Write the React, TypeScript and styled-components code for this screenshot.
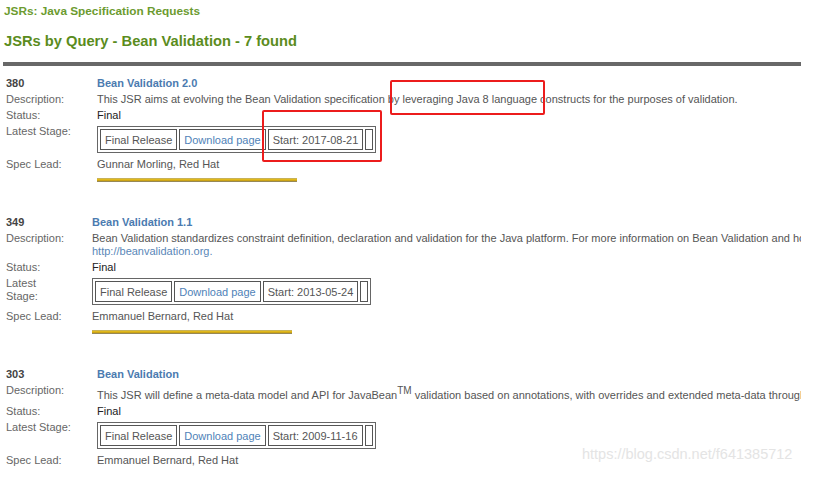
import styled, { createGlobalStyle } from "styled-components";

const GlobalStyle = createGlobalStyle`
  html, body {
    margin: 0;
    padding: 0;
    background: #fff;
    overflow: hidden;
  }
  body {
    font-family: "Liberation Sans", Arial, sans-serif;
  }
`;

const Page = styled.div`
  position: relative;
  width: 801px;
  height: 478px;
  overflow: hidden;
`;

const SiteTitle = styled.div`
  padding: 4px 0 0 4px;
  font-size: 11.8px;
  font-weight: bold;
  line-height: 14px;
  color: #6c9b30;
`;

const Heading = styled.h1`
  margin: 13px 0 0 4px;
  font-size: 14.7px;
  line-height: 20px;
  font-weight: bold;
  color: #5b8c1d;
`;

const Rule = styled.div`
  margin: 11px 0 0 3px;
  height: 4px;
  background: #686868;
`;

const EntryList = styled.div`
  padding-top: 9px;
`;

const Entry = styled.div<{ $labelWidth: number }>`
  display: grid;
  grid-template-columns: ${(p) => p.$labelWidth}px 1fr;
  padding-left: 6px;
  font-size: 11px;
  line-height: 13px;
  & + & {
    margin-top: 32px;
  }
`;

const Label = styled.div<{ $strong?: boolean }>`
  padding: 2px 0 1px;
  color: ${(p) => (p.$strong ? "#444" : "#666")};
  font-weight: ${(p) => (p.$strong ? "bold" : "normal")};
  white-space: pre-line;
`;

const Value = styled.div<{ $dark?: boolean }>`
  padding: 2px 0 1px;
  min-width: 0;
  color: ${(p) => (p.$dark ? "#222" : "#555")};
  white-space: nowrap;
`;

const Title = styled.a`
  color: #4b7bb0;
  font-weight: bold;
  text-decoration: none;
`;

const Link = styled.a`
  color: #5a87b8;
  text-decoration: none;
`;

const Sup = styled.span`
  font-size: 10px;
  line-height: 13px;
  vertical-align: 5px;
`;

const StageCellWrap = styled.div`
  padding: 3px 0 3px;
`;

const StageBox = styled.div`
  display: inline-flex;
  gap: 2px;
  padding: 2px;
  border: 1px solid #666;
`;

const StageCell = styled.div<{ $empty?: boolean }>`
  border: 1px solid #555;
  padding: 4px ${(p) => (p.$empty ? "3px" : "4px")} 2px;
  line-height: 13px;
  min-height: 13px;
  color: #555;
  a {
    color: #4f82b8;
    text-decoration: none;
  }
`;

const GoldLine = styled.div`
  grid-column: 2;
  margin-top: 6px;
  width: 200px;
  height: 4px;
  background: linear-gradient(#b9ad78, #e3bb1c 35%, #caa114 65%, #7a7a7a);
`;

const Annotation = styled.div<{
  $x: number;
  $y: number;
  $w: number;
  $h: number;
}>`
  position: absolute;
  left: ${(p) => p.$x}px;
  top: ${(p) => p.$y}px;
  width: ${(p) => p.$w}px;
  height: ${(p) => p.$h}px;
  border: 2px solid #ec1c1c;
  border-radius: 2px;
  box-sizing: border-box;
  pointer-events: none;
`;

const Watermark = styled.div`
  position: absolute;
  left: 582px;
  top: 445px;
  font-size: 14.5px;
  line-height: 18px;
  color: #e4e4e4;
  white-space: nowrap;
`;

type Jsr = {
  id: number;
  title: string;
  labelWidth: number;
  description: React.ReactNode;
  stageLabel: string;
  start: string;
  lead: string;
};

const jsrs: Jsr[] = [
  {
    id: 380,
    title: "Bean Validation 2.0",
    labelWidth: 91,
    description:
      "This JSR aims at evolving the Bean Validation specification by leveraging Java 8 language constructs for the purposes of validation.",
    stageLabel: "Latest Stage:",
    start: "2017-08-21",
    lead: "Gunnar Morling, Red Hat",
  },
  {
    id: 349,
    title: "Bean Validation 1.1",
    labelWidth: 86,
    description: (
      <>
        Bean Validation standardizes constraint definition, declaration and
        validation for the Java platform. For more information on Bean
        Validation and how to work with it, please check out the Bean
        Validation website at
        <br />
        <Link href="#">http://beanvalidation.org.</Link>
      </>
    ),
    stageLabel: "Latest\nStage:",
    start: "2013-05-24",
    lead: "Emmanuel Bernard, Red Hat",
  },
  {
    id: 303,
    title: "Bean Validation",
    labelWidth: 91,
    description: (
      <>
        This JSR will define a meta-data model and API for JavaBean
        <Sup>TM</Sup> validation based on annotations, with overrides and
        extended meta-data through the use of XML validation descriptors.
      </>
    ),
    stageLabel: "Latest Stage:",
    start: "2009-11-16",
    lead: "Emmanuel Bernard, Red Hat",
  },
];

export default function App() {
  return (
    <Page>
      <GlobalStyle />
      <SiteTitle>JSRs: Java Specification Requests</SiteTitle>
      <Heading>JSRs by Query - Bean Validation - 7 found</Heading>
      <Rule />
      <EntryList>
        {jsrs.map((jsr, i) => (
          <Entry key={jsr.id} $labelWidth={jsr.labelWidth}>
            <Label $strong>{jsr.id}</Label>
            <Value>
              <Title href="#">{jsr.title}</Title>
            </Value>
            <Label>Description:</Label>
            <Value>{jsr.description}</Value>
            <Label>Status:</Label>
            <Value $dark>Final</Value>
            <Label>{jsr.stageLabel}</Label>
            <StageCellWrap>
              <StageBox>
                <StageCell>Final Release</StageCell>
                <StageCell>
                  <a href="#">Download page</a>
                </StageCell>
                <StageCell>Start: {jsr.start}</StageCell>
                <StageCell $empty />
              </StageBox>
            </StageCellWrap>
            <Label>Spec Lead:</Label>
            <Value>{jsr.lead}</Value>
            {/* the last divider falls below the cropped screenshot */}
            {i < jsrs.length - 1 && <GoldLine />}
          </Entry>
        ))}
      </EntryList>
      <Annotation $x={390} $y={80} $w={155} $h={35} />
      <Annotation $x={262} $y={110} $w={120} $h={52} />
      <Watermark>https://blog.csdn.net/f641385712</Watermark>
    </Page>
  );
}
